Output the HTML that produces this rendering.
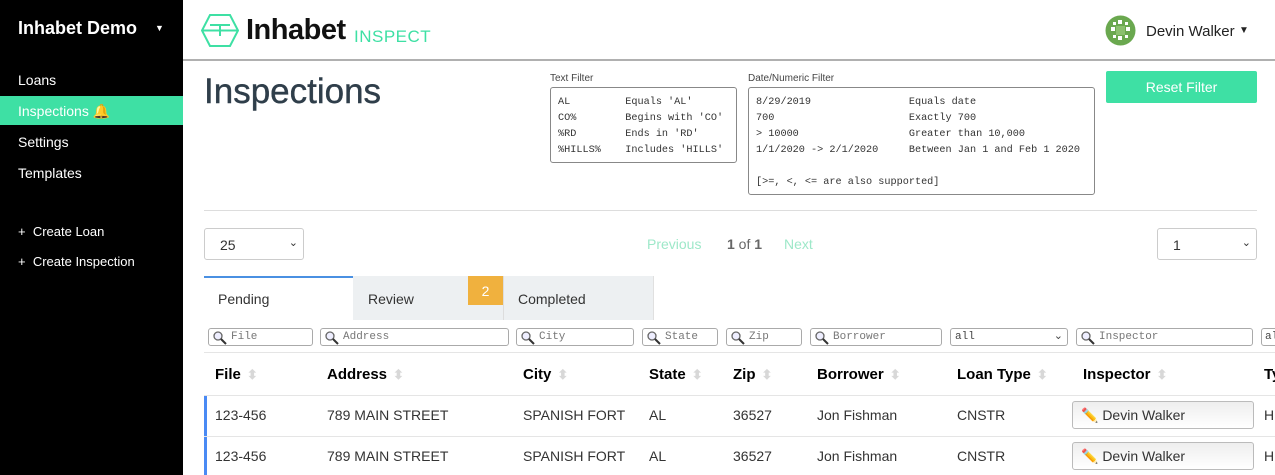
<!DOCTYPE html>
<html><head><style>
*{box-sizing:border-box;margin:0;padding:0}
body{width:1275px;height:475px;overflow:hidden;font-family:"Liberation Sans",sans-serif;background:#fff;position:relative;color:#333}
.a{position:absolute}
.side{left:0;top:0;width:183px;height:475px;background:#000;color:#fff}
.side div{position:absolute;left:18px;font-size:14px}
.mono{font-family:"Liberation Mono",monospace}
.fi{position:absolute;top:328px;height:18px;border:1px solid #aaa;border-radius:3px;font-family:"Liberation Mono",monospace;font-size:11px;color:#777;padding:2px 0 0 22px;background:#fff}
.fi svg{position:absolute;left:4px;top:2px}
.th{position:absolute;top:366px;font-weight:bold;font-size:15px;color:#000}
.th span{color:#d8d8d8;font-size:13px;margin-left:6px}
.td{position:absolute;font-size:14px;color:#333}
.btn{position:absolute;left:1072px;width:182px;height:28px;border:1px solid #bbb;border-radius:3px;background:linear-gradient(#eee,#fff);font-size:14px;padding:5px 0 0 8px;color:#333}
</style></head><body>
<div class="a side">
<div style="top:18px;font-size:18px;font-weight:bold">Inhabet Demo</div>
<div style="left:155px;top:23px;font-size:9px">▼</div>
<div style="top:72px">Loans</div>
<div style="left:0;top:96px;width:183px;height:29px;background:#3ee0a4"></div>
<div style="top:103px">Inspections 🔔</div>
<div style="top:134px">Settings</div>
<div style="top:165px">Templates</div>
<div style="top:224px;font-size:13px">+&nbsp; Create Loan</div>
<div style="top:254px;font-size:13px">+&nbsp; Create Inspection</div>
</div>
<div class="a" style="left:183px;top:59px;width:1092px;height:2px;background:#b0b0b0"></div>
<svg class="a" style="left:201px;top:14px" width="38" height="33" viewBox="0 0 38 33"><g fill="none" stroke="#3ee0a4" stroke-width="2"><path d="M9 1H29L37 16.5 29 32H9L1 16.5Z"/><path d="M1 16.5H37M9 11H29M19 11V22"/></g></svg>
<div class="a" style="left:246px;top:14px;font-size:29px;font-weight:bold;color:#111;letter-spacing:-0.5px">Inhabet</div>
<div class="a" style="left:354px;top:27px;font-size:17px;color:#3ee0a4;letter-spacing:.5px">INSPECT</div>
<svg class="a" style="left:1105px;top:15px" width="31" height="31" viewBox="0 0 31 31"><circle cx="15.5" cy="15.5" r="15" fill="#6aa84f"/><g fill="#fff"><rect x="6" y="12" width="4" height="4"/><rect x="21" y="12" width="4" height="4"/><rect x="13" y="5" width="4" height="4"/><rect x="13" y="21" width="4" height="4"/><rect x="11" y="11" width="9" height="9" fill="#8cc06f"/><rect x="8" y="7" width="3" height="3"/><rect x="20" y="7" width="3" height="3"/><rect x="8" y="20" width="3" height="3"/><rect x="20" y="20" width="3" height="3"/></g></svg>
<div class="a" style="left:1146px;top:23px;font-size:15px;color:#222">Devin Walker</div>
<div class="a" style="left:1239px;top:25px;font-size:10px;color:#222">▼</div>
<div class="a" style="left:204px;top:72px;font-size:35px;color:#2f3e4a;-webkit-text-stroke:0.4px #2f3e4a">Inspections</div>
<div class="a" style="left:550px;top:73px;font-size:10px;color:#444">Text Filter</div>
<div class="a mono" style="left:550px;top:87px;width:187px;height:76px;border:1px solid #888;border-radius:3px;font-size:10.2px;line-height:16px;padding:7px 0 0 7px;white-space:pre;color:#333">AL         Equals 'AL'
CO%        Begins with 'CO'
%RD        Ends in 'RD'
%HILLS%    Includes 'HILLS'</div>
<div class="a" style="left:748px;top:73px;font-size:10px;color:#444">Date/Numeric Filter</div>
<div class="a mono" style="left:748px;top:87px;width:347px;height:108px;border:1px solid #888;border-radius:3px;font-size:10.2px;line-height:16px;padding:7px 0 0 7px;white-space:pre;color:#333">8/29/2019                Equals date
700                      Exactly 700
&gt; 10000                  Greater than 10,000
1/1/2020 -&gt; 2/1/2020     Between Jan 1 and Feb 1 2020

[&gt;=, &lt;, &lt;= are also supported]</div>
<div class="a" style="left:1106px;top:71px;width:151px;height:32px;background:#3ee0a4;border-radius:2px;color:#fff;font-size:14px;text-align:center;line-height:33px">Reset Filter</div>
<div class="a" style="left:204px;top:210px;width:1053px;height:1px;background:#ddd"></div>
<div class="a" style="left:204px;top:228px;width:100px;height:32px;border:1px solid #ccc;border-radius:3px;font-size:14px;padding:8px 0 0 15px;color:#333">25<span style="position:absolute;right:5px;top:7px;font-size:11px">⌄</span></div>
<div class="a" style="left:647px;top:236px;font-size:14px;color:#9ee8c9">Previous</div>
<div class="a" style="left:727px;top:236px;font-size:14px;color:#666"><b>1</b> of <b>1</b></div>
<div class="a" style="left:784px;top:236px;font-size:14px;color:#9ee8c9">Next</div>
<div class="a" style="left:1157px;top:228px;width:100px;height:32px;border:1px solid #ccc;border-radius:3px;font-size:14px;padding:8px 0 0 15px;color:#333">1<span style="position:absolute;right:5px;top:7px;font-size:11px">⌄</span></div>
<div class="a" style="left:204px;top:276px;width:149px;height:44px;background:#fff;border-top:2px solid #4a90e2"></div>
<div class="a" style="left:353px;top:276px;width:301px;height:44px;background:#edf0f2;border-right:1px solid #e0e0e0"></div>
<div class="a" style="left:503px;top:276px;width:1px;height:44px;background:#ddd"></div>
<div class="a" style="left:468px;top:276px;width:35px;height:29px;background:#f0b13e;color:#fff;font-size:14px;text-align:center;line-height:30px">2</div>
<div class="a" style="left:218px;top:291px;font-size:14px;color:#333">Pending</div>
<div class="a" style="left:368px;top:291px;font-size:14px;color:#333">Review</div>
<div class="a" style="left:518px;top:291px;font-size:14px;color:#333">Completed</div>
<div class="fi" style="left:208px;width:105px"><svg width="14" height="14"><circle cx="5" cy="5" r="4" fill="#eef" stroke="#666" stroke-width="1.3"/><path d="M8 8L13 13" stroke="#333" stroke-width="2"/></svg>File</div>
<div class="fi" style="left:320px;width:189px"><svg width="14" height="14"><circle cx="5" cy="5" r="4" fill="#eef" stroke="#666" stroke-width="1.3"/><path d="M8 8L13 13" stroke="#333" stroke-width="2"/></svg>Address</div>
<div class="fi" style="left:516px;width:118px"><svg width="14" height="14"><circle cx="5" cy="5" r="4" fill="#eef" stroke="#666" stroke-width="1.3"/><path d="M8 8L13 13" stroke="#333" stroke-width="2"/></svg>City</div>
<div class="fi" style="left:642px;width:76px"><svg width="14" height="14"><circle cx="5" cy="5" r="4" fill="#eef" stroke="#666" stroke-width="1.3"/><path d="M8 8L13 13" stroke="#333" stroke-width="2"/></svg>State</div>
<div class="fi" style="left:726px;width:76px"><svg width="14" height="14"><circle cx="5" cy="5" r="4" fill="#eef" stroke="#666" stroke-width="1.3"/><path d="M8 8L13 13" stroke="#333" stroke-width="2"/></svg>Zip</div>
<div class="fi" style="left:810px;width:132px"><svg width="14" height="14"><circle cx="5" cy="5" r="4" fill="#eef" stroke="#666" stroke-width="1.3"/><path d="M8 8L13 13" stroke="#333" stroke-width="2"/></svg>Borrower</div>
<div class="fi" style="left:950px;width:118px;padding-left:4px;color:#444">all<span style="position:absolute;right:4px;top:0px;font-size:11px">⌄</span></div>
<div class="fi" style="left:1076px;width:177px"><svg width="14" height="14"><circle cx="5" cy="5" r="4" fill="#eef" stroke="#666" stroke-width="1.3"/><path d="M8 8L13 13" stroke="#333" stroke-width="2"/></svg>Inspector</div>
<div class="fi" style="left:1261px;width:40px;padding-left:3px;color:#444">all</div>
<div class="a" style="left:204px;top:352px;width:1071px;height:1px;background:#e5e5e5"></div>
<div class="th" style="left:215px">File<span>⬍</span></div>
<div class="th" style="left:327px">Address<span>⬍</span></div>
<div class="th" style="left:523px">City<span>⬍</span></div>
<div class="th" style="left:649px">State<span>⬍</span></div>
<div class="th" style="left:733px">Zip<span>⬍</span></div>
<div class="th" style="left:817px">Borrower<span>⬍</span></div>
<div class="th" style="left:957px">Loan Type<span>⬍</span></div>
<div class="th" style="left:1083px">Inspector<span>⬍</span></div>
<div class="th" style="left:1264px">Ty</div>
<div class="a" style="left:204px;top:395px;width:1071px;height:1px;background:#e5e5e5"></div>
<div class="a" style="left:204px;top:436px;width:1071px;height:1px;background:#e5e5e5"></div>
<div class="a" style="left:204px;top:396px;width:3px;height:40px;background:#4a8af4"></div>
<div class="a" style="left:204px;top:437px;width:3px;height:38px;background:#4a8af4"></div>
<div class="td" style="left:215px;top:407px">123-456</div><div class="td" style="left:327px;top:407px">789 MAIN STREET</div><div class="td" style="left:523px;top:407px">SPANISH FORT</div><div class="td" style="left:649px;top:407px">AL</div><div class="td" style="left:733px;top:407px">36527</div><div class="td" style="left:817px;top:407px">Jon Fishman</div><div class="td" style="left:957px;top:407px">CNSTR</div><div class="btn" style="top:401px">✏️ Devin Walker</div><div class="td" style="left:1264px;top:407px">H</div>
<div class="td" style="left:215px;top:448px">123-456</div><div class="td" style="left:327px;top:448px">789 MAIN STREET</div><div class="td" style="left:523px;top:448px">SPANISH FORT</div><div class="td" style="left:649px;top:448px">AL</div><div class="td" style="left:733px;top:448px">36527</div><div class="td" style="left:817px;top:448px">Jon Fishman</div><div class="td" style="left:957px;top:448px">CNSTR</div><div class="btn" style="top:442px">✏️ Devin Walker</div><div class="td" style="left:1264px;top:448px">H</div>
</body></html>
